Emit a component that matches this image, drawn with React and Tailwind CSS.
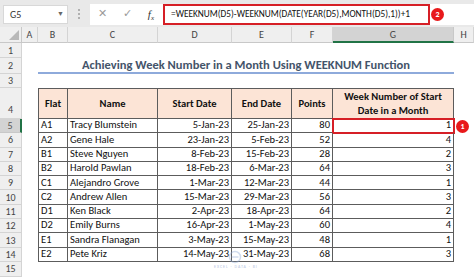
import React from "react";

const rows = [
  ["A1", "Tracy Blumstein", "5-Jan-23", "25-Jan-23", "80", "1"],
  ["A2", "Gene Hale", "23-Jan-23", "5-Feb-23", "52", "4"],
  ["B1", "Steve Nguyen", "8-Feb-23", "15-Feb-23", "28", "2"],
  ["B2", "Harold Pawlan", "18-Feb-23", "6-Mar-23", "64", "3"],
  ["C1", "Alejandro Grove", "1-Mar-23", "12-Mar-23", "44", "1"],
  ["C2", "Andrew Allen", "15-Mar-23", "29-Mar-23", "56", "3"],
  ["D1", "Ken Black", "2-Apr-23", "18-Apr-23", "64", "2"],
  ["D2", "Emily Burns", "16-Apr-23", "1-May-23", "60", "4"],
  ["E1", "Sandra Flanagan", "3-May-23", "15-May-23", "48", "1"],
  ["E2", "Pete Kriz", "14-May-23", "31-May-23", "68", "3"],
];

const font = { fontFamily: "Carlito, Lato, 'Liberation Sans', sans-serif" };

function RowHead({ n, active }) {
  return (
    <div
      className={
        "flex items-center justify-center border-b border-r text-[10px] " +
        (active
          ? "bg-[#d3d3d3] border-b-[#c8c8c8] border-r-[#217346] border-r-2 text-[#555]"
          : "bg-[#efefef] border-[#d4d4d4] text-[#444]")
      }
    >
      {n}
    </div>
  );
}

function ColHead({ l, active }) {
  return (
    <div
      className={
        "flex items-center justify-center border-r text-[10px] " +
        (active
          ? "bg-[#d3d3d3] border-[#c8c8c8] border-b-2 border-b-[#217346] text-[#444]"
          : "bg-[#efefef] border-[#d4d4d4] border-b border-b-[#c8c8c8] text-[#444]")
      }
    >
      {l}
    </div>
  );
}

function Badge({ n }) {
  return (
    <div className="flex h-[13px] w-[13px] items-center justify-center rounded-full bg-[#e8191b] text-[8px] font-bold leading-none text-white">
      {n}
    </div>
  );
}

export default function App() {
  return (
    <div className="relative h-[278px] w-[474px] overflow-hidden bg-white text-[#111]" style={font}>
      {/* formula bar */}
      <div className="flex h-[27px] items-center bg-[#e9e9e9] pt-[1px]">
        <div className="ml-[3px] flex h-[19px] w-[65px] items-center justify-between border border-[#d8d8d8] bg-white pl-[6px] pr-[3px] text-[10px] text-[#333]">
          <span>G5</span>
          <span className="text-[7px] text-[#666]">▼</span>
        </div>
        <div className="flex w-[22px] flex-col items-center gap-[2px]">
          <span className="h-[2px] w-[2px] bg-[#b0b0b0]" />
          <span className="h-[2px] w-[2px] bg-[#b0b0b0]" />
          <span className="h-[2px] w-[2px] bg-[#b0b0b0]" />
        </div>
        <div className="flex h-[21px] w-[72px] items-center justify-around bg-white text-[#9a9a9a]">
          <span className="text-[11px]">✕</span>
          <span className="text-[11px]">✓</span>
          <span className="font-['Liberation_Serif'] text-[11px] italic text-[#333]">
            f<sub className="text-[7px]">x</sub>
          </span>
        </div>
        <div className="flex h-[21px] flex-1 items-center bg-white">
          <div className="ml-[1px] flex h-[21px] w-[267px] items-center overflow-hidden whitespace-nowrap border-2 border-[#d61f26] pl-[6px] text-[9.3px] text-[#111]">
            =WEEKNUM(D5)-WEEKNUM(DATE(YEAR(D5),MONTH(D5),1))+1
          </div>
          <div className="ml-[1px]">
            <Badge n="2" />
          </div>
        </div>
      </div>

      {/* sheet */}
      <div className="grid grid-cols-[22px_16px_30px_90px_74px_60px_41px_121px_20px] grid-rows-[16px_15px_16px_14px_31px_repeat(10,14.3px)_15px]">
        {/* column header */}
        <div className="flex items-end justify-end border-r border-b border-[#c8c8c8] bg-[#efefef] p-[2px]">
          <svg width="10" height="10" viewBox="0 0 10 10">
            <polygon points="10,0 10,10 0,10" fill="#b8b8b8" />
          </svg>
        </div>
        {["A", "B", "C", "D", "E", "F", "G", "H"].map((l) => (
          <ColHead key={l} l={l} active={l === "G"} />
        ))}

        {/* row 1 */}
        <RowHead n="1" />
        <div className="col-span-8" />

        {/* row 2 title */}
        <RowHead n="2" />
        <div />
        <div className="col-span-6 flex items-center justify-center border-b-2 border-[#8eaadb] text-[12.5px] font-bold text-[#44546a]">
          Achieving Week Number in a Month Using WEEKNUM Function
        </div>
        <div />

        {/* row 3 */}
        <RowHead n="3" />
        <div className="col-span-8" />

        {/* row 4 header */}
        <div className="flex items-end justify-center border-b border-r border-[#d4d4d4] bg-[#efefef] pb-[1px] text-[10px] text-[#444]">
          4
        </div>
        <div />
        {["Flat", "Name", "Start Date", "End Date", "Points"].map((h, i) => (
          <div
            key={h}
            className={
              "flex items-center justify-center border-y border-r border-[#5c5c5c] bg-[#fce4d6] text-[10.5px] font-bold " +
              (i === 0 ? "border-l" : "")
            }
          >
            {h}
          </div>
        ))}
        <div className="flex flex-col items-center justify-center border-y border-r border-[#5c5c5c] bg-[#fce4d6] text-[10.5px] font-bold leading-[14px]">
          <span>Week Number of Start</span>
          <span>Date in a Month</span>
        </div>
        <div />

        {rows.map((r, ri) => (
          <React.Fragment key={r[0]}>
            <RowHead n={String(ri + 5)} active={ri === 0} />
            <div />
            <div className="flex items-center border-x border-b border-[#5c5c5c] pl-[2px] text-[10.5px] leading-none">
              {r[0]}
            </div>
            <div className="flex items-center border-r border-b border-[#5c5c5c] pl-[2px] text-[10.5px] leading-none">
              {r[1]}
            </div>
            {r.slice(2).map((v, vi) => (
              <div
                key={vi}
                className={
                  "flex items-center justify-end border-r border-b border-[#5c5c5c] pr-[2px] text-[10.5px] leading-none " +
                  (ri === 0 && vi === 3 ? "outline-2 outline-[#d61f26] -outline-offset-1" : "")
                }
              >
                {v}
              </div>
            ))}
            <div className="flex items-center pl-[2px]">{ri === 0 ? <Badge n="1" /> : null}</div>
          </React.Fragment>
        ))}

        {/* row 15 */}
        <RowHead n="15" />
        <div className="col-span-8" />
      </div>

      {/* faint watermark logo */}
      <svg className="pointer-events-none absolute left-[228px] top-[250px] opacity-40" width="14" height="14" viewBox="0 0 14 14">
        <circle cx="7" cy="7" r="5.5" fill="none" stroke="#8fa9d6" strokeWidth="1.5" />
        <path d="M3.5 7h7" stroke="#8fa9d6" strokeWidth="1.5" />
      </svg>
      <div className="pointer-events-none absolute left-[214px] top-[265px] text-[4px] leading-none tracking-[1px] text-[#b5c5df]">
        EXCEL · DATA · BI
      </div>
    </div>
  );
}
